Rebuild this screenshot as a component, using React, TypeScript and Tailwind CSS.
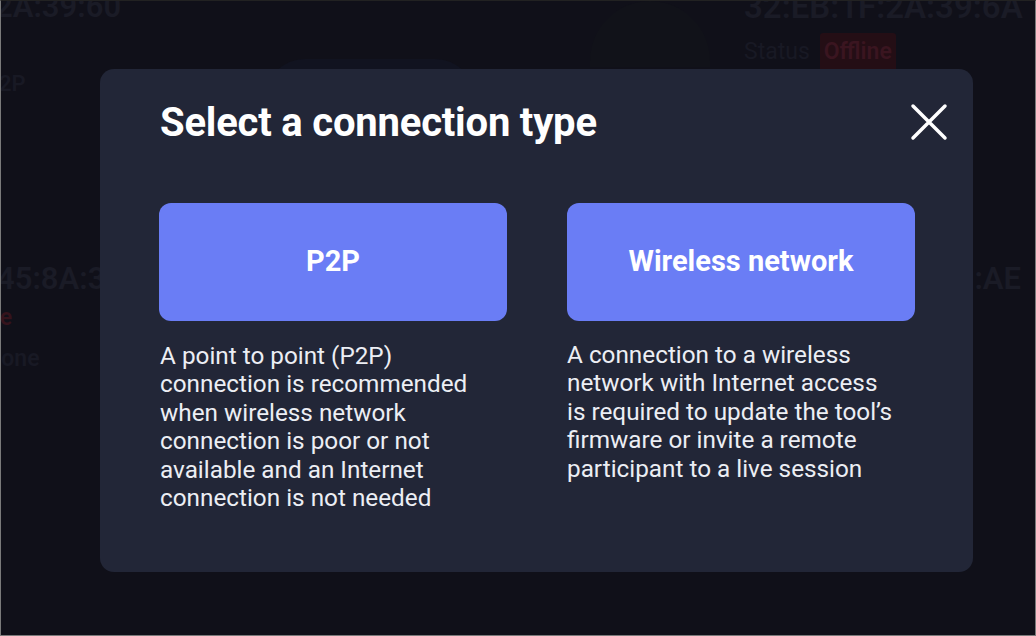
import React from "react";

function CloseIcon() {
  return (
    <svg width="40" height="40" viewBox="0 0 40 40" fill="none">
      <path d="M4 4 L36 36 M36 4 L4 36" stroke="white" strokeWidth="3.5" strokeLinecap="round" />
    </svg>
  );
}

export default function App() {
  return (
    <div
      className="relative w-[1036px] h-[636px] overflow-hidden bg-[#101019] border border-[#7a7a7a] border-t-[#222]"
      style={{ fontFamily: "Roboto, 'Noto Sans', sans-serif" }}
    >
      {/* Background app (dimmed) */}
      <div className="flex flex-col h-full">
        <div className="flex h-[240px]">
          <div className="flex flex-col w-[260px] -ml-[6px] -mt-[12px]">
            <div className="text-[31px] font-semibold text-[#1a1b26] leading-[36px]">2A:39:60</div>
            <div className="mt-[42px] ml-[4px] text-[22px] font-semibold text-[#181924]">2P</div>
          </div>
          <div className="ml-[10px] mt-[58px] w-[210px] h-[40px] rounded-t-full bg-[#111320]"></div>
          <div className="ml-[115px] w-[120px] h-[66px] rounded-t-full bg-[#111219]"></div>
          <div className="flex flex-col ml-[34px] -mt-[12px]">
            <div className="text-[33px] font-semibold text-[#1a1b26] leading-[36px]">32:EB:1F:2A:39:6A</div>
            <div className="flex items-center gap-[10px] mt-[8px]">
              <span className="text-[23px] text-[#181924]">Status</span>
              <span className="text-[23px] font-semibold text-[#3a1520] bg-[#240e15] px-[4px] py-[2px] rounded-[3px]">Offline</span>
            </div>
          </div>
        </div>
        <div className="flex justify-between">
          <div className="flex flex-col -ml-[4px] mt-[20px]">
            <div className="text-[31px] font-semibold text-[#1a1b26] leading-[36px]">45:8A:3</div>
            <div className="mt-[4px] -ml-[10px] text-[23px] font-semibold text-[#35131c]">ne</div>
            <div className="mt-[6px] -ml-[12px] text-[23px] font-semibold text-[#181924]">None</div>
          </div>
          <div className="mt-[20px] mr-[14px] text-[31px] font-semibold text-[#1a1b26] leading-[36px]">:AE</div>
        </div>
      </div>

      {/* Modal */}
      <div className="absolute left-[99px] top-[68px] w-[873px] h-[503px] rounded-[14px] bg-[#222637] pl-[59px] pr-[58px] pt-[26px]">
        <div className="flex items-center justify-between h-[56px]">
          <h2 className="ml-[1px] text-[40px] font-bold text-white tracking-[-0.2px]">Select a connection type</h2>
          <button className="mr-[-34px] mt-[-2px]">
            <CloseIcon />
          </button>
        </div>
        <div className="grid grid-cols-2 gap-[60px] mt-[52px]">
          <div className="flex flex-col">
            <button className="h-[118px] rounded-[12px] bg-[#6a7df5] text-white text-[29px] font-bold">P2P</button>
            <p className="mt-[21px] ml-[1px] w-[332px] text-[24.3px] leading-[28.4px] text-[#eceef4]">
              A point to point (P2P) connection is recommended when wireless network connection is poor or not
              available and an Internet connection is not needed
            </p>
          </div>
          <div className="flex flex-col">
            <button className="h-[118px] rounded-[12px] bg-[#6a7df5] text-white text-[29px] font-bold">Wireless network</button>
            <p className="mt-[20px] w-[332px] text-[24.3px] leading-[28.4px] text-[#eceef4]">
              A connection to a wireless network with Internet access is required to update the tool’s firmware or
              invite a remote participant to a live session
            </p>
          </div>
        </div>
      </div>
    </div>
  );
}
